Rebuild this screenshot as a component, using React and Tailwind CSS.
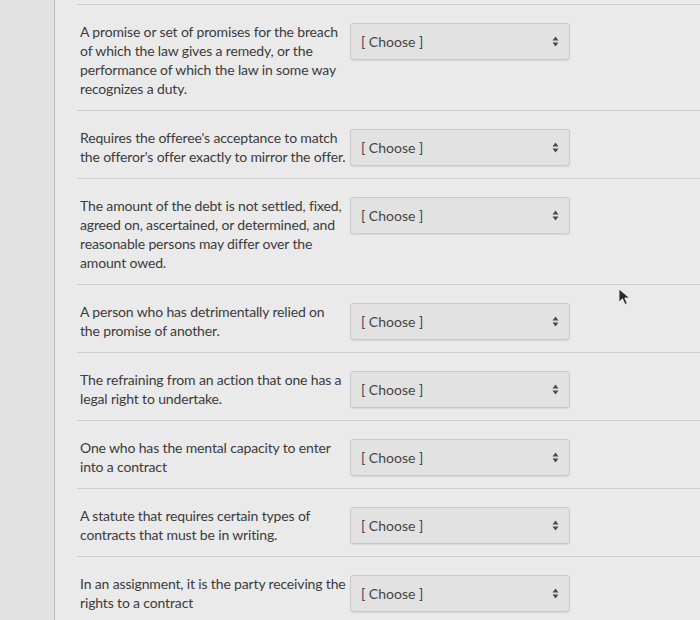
import React from "react";

// line breaks kept as they appear on the page
const questions = [
  [
    "A promise or set of promises for the breach",
    "of which the law gives a remedy, or the",
    "performance of which the law in some way",
    "recognizes a duty.",
  ],
  [
    "Requires the offeree's acceptance to match",
    "the offeror's offer exactly to mirror the offer.",
  ],
  [
    "The amount of the debt is not settled, fixed,",
    "agreed on, ascertained, or determined, and",
    "reasonable persons may differ over the",
    "amount owed.",
  ],
  ["A person who has detrimentally relied on", "the promise of another."],
  ["The refraining from an action that one has a", "legal right to undertake."],
  ["One who has the mental capacity to enter", "into a contract"],
  ["A statute that requires certain types of", "contracts that must be in writing."],
  ["In an assignment, it is the party receiving the", "rights to a contract"],
];

const SortArrows = () => (
  <svg width="7" height="11" viewBox="0 0 7 11" className="text-[#4a4a4a]">
    <path d="M3.5 0.5 L6.5 4.5 L0.5 4.5 Z" fill="currentColor" />
    <path d="M3.5 10.5 L6.5 6.5 L0.5 6.5 Z" fill="currentColor" />
  </svg>
);

const ChooseSelect = () => (
  <div className="mt-[1px] flex h-[37px] w-[220px] shrink-0 items-center justify-between rounded-[3px] border border-[#c9c9c9] bg-[#e2e2e2] pl-[10px] pr-[10px] shadow-[0_1px_1px_rgba(0,0,0,0.08)]">
    <span className="text-[14px] text-[#454545]">[ Choose ]</span>
    <SortArrows />
  </div>
);

const Cursor = () => (
  <svg
    width="14"
    height="18"
    viewBox="0 0 14 18"
    className="absolute left-[618px] top-[288px]"
  >
    <path
      d="M1 1 L1 14 L4.5 10.8 L7 16.5 L9.2 15.5 L6.8 10 L11.5 10 Z"
      fill="#2a2a2a"
      stroke="#f2f2f2"
      strokeWidth="0.8"
    />
  </svg>
);

export default function App() {
  return (
    <div
      className="relative flex h-[620px] w-[700px] overflow-hidden bg-[#e6e6e6]"
      style={{ fontFamily: "Lato, 'Open Sans', sans-serif" }}
    >
      {/* left gutter */}
      <div className="w-[55px] shrink-0 border-r border-[#bcbcbc] bg-[#e2e2e2]" />

      {/* question list */}
      <div className="flex-1 bg-[#eaeaea] pl-[22px] pt-[4px]">
        {questions.map((lines, i) => (
          <div
            key={i}
            className="flex items-start border-t border-[#cdcdcd] pb-[12px] pl-[3px] pt-[17px]"
          >
            <p className="w-[270px] shrink-0 text-[14px] leading-[19px] tracking-[-0.15px] text-[#3b3b3b]">
              {lines.map((l, j) => (
                <span key={j} className="block whitespace-nowrap">
                  {l}
                </span>
              ))}
            </p>
            <ChooseSelect />
          </div>
        ))}
        <div className="border-t border-[#cdcdcd]" />
      </div>

      <Cursor />
    </div>
  );
}
